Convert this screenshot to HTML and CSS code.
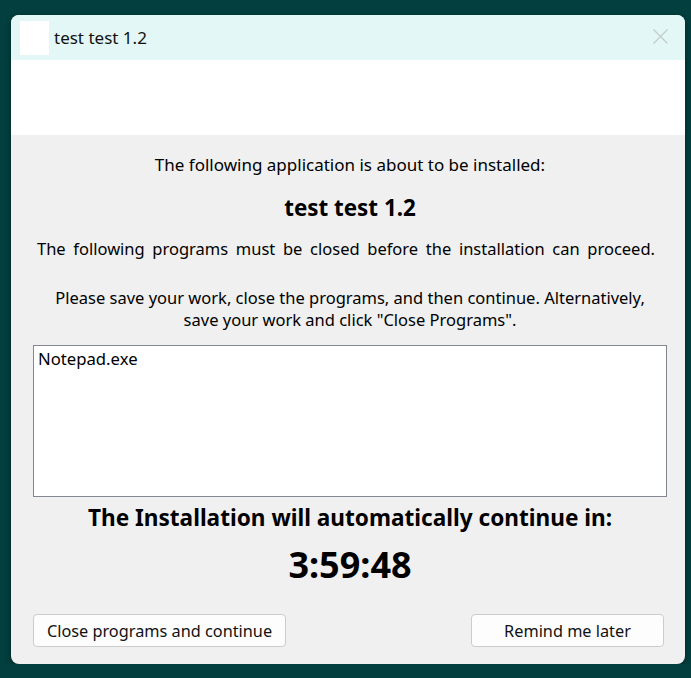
FILE: index.html
```html
<!DOCTYPE html>
<html lang="en">
<head>
    <meta charset="UTF-8">
    <title>test test 1.2</title>
    <link rel="stylesheet" href="styles.css">
</head>
<body>

    <!-- Installer dialog -->
    <div class="window">
        <div class="titlebar">
            <div class="app-icon"></div>
            <span class="title">test test 1.2</span>
            <svg class="close" width="15" height="15" viewBox="0 0 15 15">
                <path d="M0.5 0.5 L14.5 14.5 M14.5 0.5 L0.5 14.5" stroke="#c3cbcb" stroke-width="1.2" fill="none"/>
            </svg>
        </div>
        <div class="banner"></div>

        <div class="content">
            <p class="intro">The following application is about to be installed:</p>
            <h2 class="app-name">test test 1.2</h2>
            <p class="notice">The following programs must be closed before the installation can proceed.</p>
            <p class="hint">Please save your work, close the programs, and then continue. Alternatively,<br>save your work and click "Close Programs".</p>

            <div class="program-list">
                <div class="program">Notepad.exe</div>
            </div>

            <p class="countdown-label">The Installation will automatically continue in:</p>
            <p class="countdown">3:59:48</p>

            <div class="actions">
                <button class="btn btn-close">Close programs and continue</button>
                <button class="btn btn-later">Remind me later</button>
            </div>
        </div>
    </div>

</body>
</html>
```

FILE: styles.css
```css
/* Basic styles */
* {
    box-sizing: border-box;
}

body {
    margin: 0;
    padding: 15px 0 0 11px;
    background-color: #023f3e;
    font-family: 'Noto Sans', 'Open Sans', sans-serif;
    color: #000;
}

.window {
    width: 674px;
    height: 649px;
    border-radius: 8px;
    overflow: hidden;
    background-color: #f0f0f0;
    box-shadow: 0 2px 6px rgba(0, 0, 0, 0.4);
    display: flex;
    flex-direction: column;
}

/* Title bar */
.titlebar {
    height: 45px;
    background-color: #e3f7f6;
    display: flex;
    align-items: center;
    padding-left: 9px;
    position: relative;
}

.app-icon {
    width: 29px;
    height: 34px;
    background-color: #ffffff;
    margin-right: 5px;
}

.title {
    font-size: 17px;
    color: #111;
}

.close {
    position: absolute;
    right: 17px;
    top: 14px;
}

.banner {
    height: 75px;
    background-color: #ffffff;
}

/* Body */
.content {
    flex: 1;
    padding: 0 18px 0 22px;
    text-align: center;
}

.content p {
    margin: 0;
}

.intro {
    margin-top: 19px !important;
    font-size: 17px;
    line-height: 22px;
}

.app-name {
    margin: 18px 0 0;
    font-size: 22.4px;
    line-height: 28px;
    font-weight: 700;
}

.notice {
    margin: 16px 0 0 4px !important;
    font-size: 16.5px;
    line-height: 22px;
    text-align: justify;
    text-align-last: justify;
    width: 618px;
}

.hint {
    margin-top: 27px !important;
    font-size: 16.5px;
    line-height: 22px;
}

.program-list {
    margin-top: 14px;
    height: 152px;
    border: 1px solid #828790;
    background-color: #ffffff;
    text-align: left;
    padding: 2px 4px;
}

.program {
    font-size: 16.7px;
    line-height: 22px;
}

.countdown-label {
    margin-top: 7px !important;
    font-size: 22.6px;
    line-height: 28px;
    font-weight: 700;
}

.countdown {
    margin-top: 13px !important;
    font-size: 36px;
    line-height: 40px;
    font-weight: 700;
}

/* Buttons */
.actions {
    margin-top: 29px;
    display: flex;
    justify-content: space-between;
    padding-right: 3px;
}

.btn {
    height: 33px;
    border: 1px solid #cccccc;
    border-radius: 4px;
    background-color: #fdfdfd;
    font-family: 'Noto Sans', 'Open Sans', sans-serif;
    font-size: 16.3px;
    color: #111;
}

.btn-close {
    width: 253px;
}

.btn-later {
    width: 193px;
}
```
